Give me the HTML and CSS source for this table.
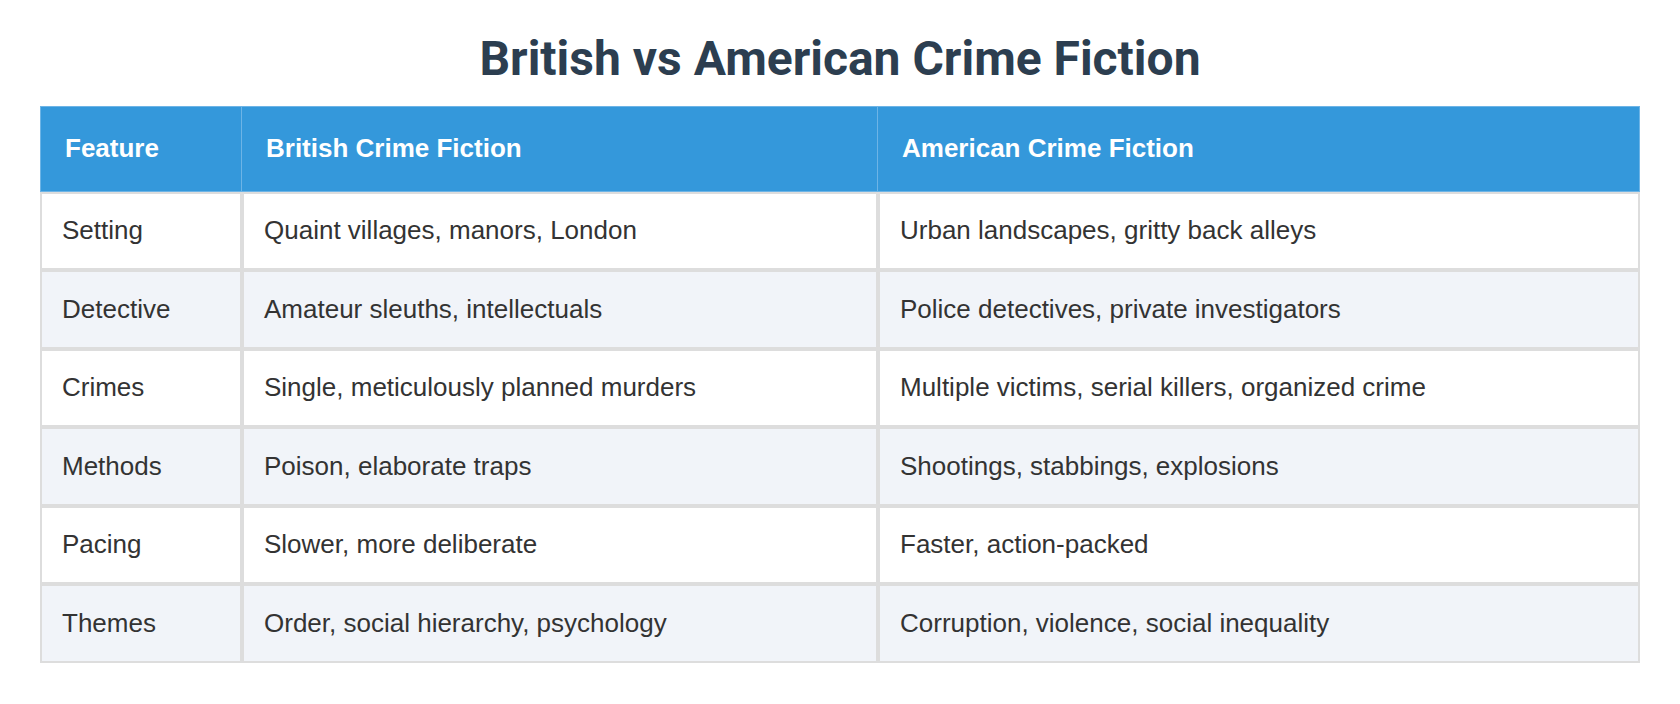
FILE: index.html
```html
<!DOCTYPE html>
<html lang="en">
<head>
<meta charset="utf-8">
<title>British vs American Crime Fiction</title>
<link rel="stylesheet" href="styles.css">
</head>
<body>
<main class="page">
  <h1 class="title">British vs American Crime Fiction</h1>
  <table class="compare">
    <colgroup>
      <col class="c-feature">
      <col class="c-british">
      <col class="c-american">
    </colgroup>
    <thead>
      <tr>
        <th>Feature</th>
        <th>British Crime Fiction</th>
        <th>American Crime Fiction</th>
      </tr>
    </thead>
    <tbody>
      <tr>
        <td>Setting</td>
        <td>Quaint villages, manors, London</td>
        <td>Urban landscapes, gritty back alleys</td>
      </tr>
      <tr>
        <td>Detective</td>
        <td>Amateur sleuths, intellectuals</td>
        <td>Police detectives, private investigators</td>
      </tr>
      <tr>
        <td>Crimes</td>
        <td>Single, meticulously planned murders</td>
        <td>Multiple victims, serial killers, organized crime</td>
      </tr>
      <tr>
        <td>Methods</td>
        <td>Poison, elaborate traps</td>
        <td>Shootings, stabbings, explosions</td>
      </tr>
      <tr>
        <td>Pacing</td>
        <td>Slower, more deliberate</td>
        <td>Faster, action-packed</td>
      </tr>
      <tr>
        <td>Themes</td>
        <td>Order, social hierarchy, psychology</td>
        <td>Corruption, violence, social inequality</td>
      </tr>
    </tbody>
  </table>
</main>
</body>
</html>
```

FILE: styles.css
```css
html, body {
  margin: 0;
  padding: 0;
  background: #ffffff;
}

body {
  font-family: "Liberation Sans", Arial, sans-serif;
  color: #333333;
}

.page {
  padding: 31px 40px 0;
}

.title {
  margin: 0 0 19px;
  text-align: center;
  font-family: Roboto, "Liberation Sans", sans-serif;
  font-weight: 700;
  font-size: 48px;
  line-height: 56px;
  color: #2c3e50;
}

.compare {
  width: 100%;
  table-layout: fixed;
  border-collapse: separate;
  border-spacing: 0;
  font-size: 26px;
}

.c-feature { width: 202px; }
.c-british { width: 636px; }
.c-american { width: auto; }

.compare th {
  background: #3498db;
  color: #ffffff;
  font-weight: 700;
  text-align: left;
  padding: 27px 20px 27px 24px;
  border-top: 1px solid #6db4e6;
  border-bottom: 1px solid #6db4e6;
  border-right: 1px solid #6db4e6;
  line-height: 29.9px;
}

.compare th:first-child {
  border-left: 1px solid #6db4e6;
  padding-left: 24px;
}

.compare td {
  padding: 22.3px 20px 22.3px 20px;
  border: 2px solid #dddddd;
  line-height: 29.9px;
  vertical-align: middle;
  color: #333333;
}

.compare td:first-child {
  padding-left: 20px;
}

.compare tbody tr:nth-child(even) td {
  background: #f1f4f9;
}
```
